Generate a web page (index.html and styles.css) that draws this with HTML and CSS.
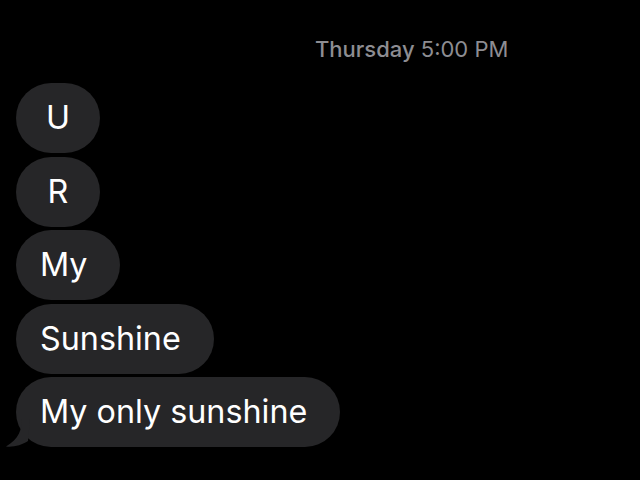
FILE: index.html
```html
<!DOCTYPE html>
<html lang="en">
<head>
  <meta charset="UTF-8" />
  <meta name="viewport" content="width=device-width, initial-scale=1.0"/>
  <title>Messages</title>
  <link rel="stylesheet" href="styles.css">
</head>
<body>
  <div class="thread">
    <div class="stamp"><b>Thursday</b> 5:00 PM</div>

    <!-- Incoming bubbles -->
    <div class="bubbles">
      <div class="bubble short">U</div>
      <div class="bubble short">R</div>
      <div class="bubble">My</div>
      <div class="bubble">Sunshine</div>
      <div class="bubble last">My only sunshine
        <svg class="tail" width="26" height="28" viewBox="0 0 26 28">
          <path d="M18 0 C18 10 15 20 2 27.5 C9 28.5 18 26 24 22 L26 0 Z" fill="#262628"/>
        </svg>
      </div>
    </div>
  </div>
</body>
</html>
```

FILE: styles.css
```css
body {
  margin: 0;
  background: #000;
  font-family: Inter, "Liberation Sans", sans-serif;
  height: 480px;
  overflow: hidden;
}

.thread {
  padding: 35px 0 0 16px;
}

.stamp {
  font-size: 22px;
  color: #8d8d92;
  padding-left: 299px;
  height: 48px;
  line-height: 28px;
}

.stamp b {
  font-weight: 500;
}

.bubbles {
  display: flex;
  flex-direction: column;
  align-items: flex-start;
  gap: 3.5px;
}

.bubble {
  position: relative;
  background: #262628;
  color: #fff;
  font-size: 32.3px;
  height: 70px;
  line-height: 70px;
  padding: 0 33px 0 24px;
  border-radius: 35px;
}

.bubble.short {
  width: 84px;
  padding: 0;
  text-align: center;
}

.tail {
  position: absolute;
  left: -12px;
  bottom: 0;
}
```
